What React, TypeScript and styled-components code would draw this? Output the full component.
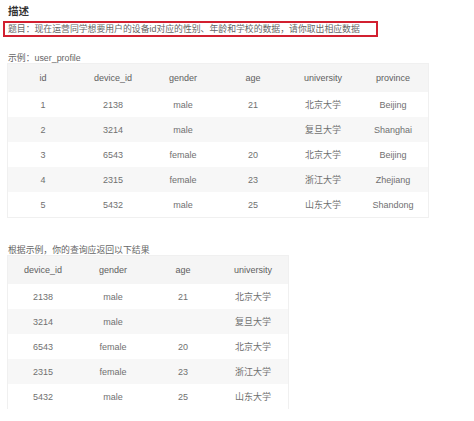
import React from "react";
import styled, { createGlobalStyle } from "styled-components";

const Global = createGlobalStyle`
  html, body { margin: 0; padding: 0; background: #ffffff; }
  body { font-family: "Liberation Sans", "Noto Sans CJK SC", sans-serif; }
`;

const Page = styled.div`
  display: flex;
  flex-direction: column;
  align-items: flex-start;
  padding: 4px 0 0 8px;
  width: 474px;
  box-sizing: border-box;
`;

const Title = styled.h3`
  margin: 0;
  font-size: 10.5px;
  line-height: 14px;
  font-weight: bold;
  color: #333;
`;

const Question = styled.div`
  margin: 3px 0 0 -5px;
  width: 375px;
  height: 16px;
  box-sizing: border-box;
  border: 2px solid #d22030;
  padding: 0 0 0 3px;
  font-size: 8.85px;
  line-height: 12px;
  color: #666;
  white-space: nowrap;
`;

const Caption = styled.div<{ $gap: number }>`
  margin-top: ${(p) => p.$gap}px;
  font-size: 8.85px;
  line-height: 12px;
  color: #666;
`;

const Table = styled.table`
  border-collapse: collapse;
  table-layout: fixed;
  font-size: 9px;
  color: #707070;
  outline: 1px solid #f0f0f0;
`;

const HeadCell = styled.th`
  width: 70px;
  height: 28px;
  padding: 0;
  font-weight: normal;
  text-align: center;
  background: #f5f5f5;
  color: #606060;
`;

const Row = styled.tr<{ $striped: boolean }>`
  background: ${(p) => (p.$striped ? "#f7f7f7" : "#ffffff")};
`;

const Cell = styled.td`
  height: 25px;
  padding: 0;
  text-align: center;
`;

const profile = [
  ["1", "2138", "male", "21", "北京大学", "Beijing"],
  ["2", "3214", "male", "", "复旦大学", "Shanghai"],
  ["3", "6543", "female", "20", "北京大学", "Beijing"],
  ["4", "2315", "female", "23", "浙江大学", "Zhejiang"],
  ["5", "5432", "male", "25", "山东大学", "Shandong"],
];

function DataTable({ head, rows }: { head: string[]; rows: string[][] }) {
  return (
    <Table>
      <thead>
        <tr>
          {head.map((h) => (
            <HeadCell key={h}>{h}</HeadCell>
          ))}
        </tr>
      </thead>
      <tbody>
        {rows.map((r, i) => (
          <Row key={i} $striped={i % 2 === 1}>
            {r.map((c, j) => (
              <Cell key={j}>{c}</Cell>
            ))}
          </Row>
        ))}
      </tbody>
    </Table>
  );
}

export default function App() {
  return (
    <>
      <Global />
      <Page>
        <Title>描述</Title>
        <Question>题目：现在运营同学想要用户的设备id对应的性别、年龄和学校的数据，请你取出相应数据</Question>
        <Caption $gap={15}>示例：user_profile</Caption>
        <DataTable
          head={["id", "device_id", "gender", "age", "university", "province"]}
          rows={profile}
        />
        <Caption $gap={27}>根据示例，你的查询应返回以下结果</Caption>
        <DataTable
          head={["device_id", "gender", "age", "university"]}
          rows={profile.map((r) => r.slice(1, 5))}
        />
      </Page>
    </>
  );
}
